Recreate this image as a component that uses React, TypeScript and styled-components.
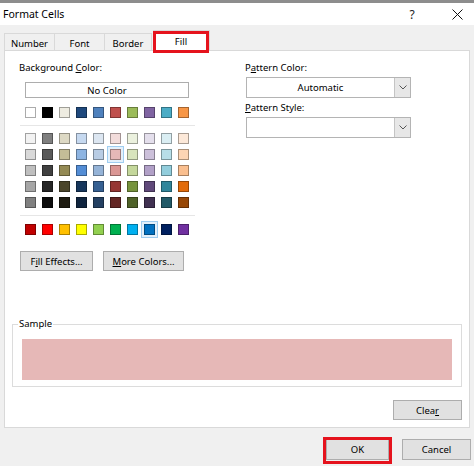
import React from 'react';
import styled, { createGlobalStyle } from 'styled-components';

const GlobalStyle = createGlobalStyle`
  html, body {
    margin: 0;
    padding: 0;
    overflow: hidden;
  }
  body {
    font-family: 'Noto Sans', 'Open Sans', sans-serif;
    font-size: 9.5px;
    color: #000;
  }
`;

const themeColors: string[][] = [
  ['#FFFFFF', '#000000', '#EEECE1', '#1F497D', '#4F81BD', '#C0504D', '#9BBB59', '#8064A2', '#4BACC6', '#F79646'],
];

const tintRows: string[][] = [
  ['#F2F2F2', '#7F7F7F', '#DDD9C4', '#C6D9F0', '#DCE6F1', '#F2DCDB', '#EBF1DE', '#E4DFEC', '#DAEEF3', '#FDE9D9'],
  ['#D9D9D9', '#595959', '#C4BD97', '#8DB4E2', '#B8CCE4', '#E6B8B7', '#D8E4BC', '#CCC0DA', '#B7DEE8', '#FCD5B4'],
  ['#BFBFBF', '#404040', '#948A54', '#538DD5', '#95B3D7', '#DA9694', '#C4D79B', '#B1A0C7', '#92CDDC', '#FABF8F'],
  ['#A6A6A6', '#262626', '#4A452A', '#16365C', '#366092', '#963634', '#76933C', '#60497A', '#31869B', '#E26B0A'],
  ['#808080', '#0D0D0D', '#1D1B10', '#0F243E', '#244062', '#632523', '#4F6228', '#403151', '#215967', '#974706'],
];

const standardColors = ['#C00000', '#FF0000', '#FFC000', '#FFFF00', '#92D050', '#00B050', '#00B0F0', '#0070C0', '#002060', '#7030A0'];

const selectedFill = '#E6B8B7';
const hoverColor = '#0070C0';

const Window = styled.div`
  width: 474px;
  height: 466px;
  background: #f0f0f0;
  display: flex;
  flex-direction: column;
`;

const TitleBar = styled.div`
  height: 22px;
  border-top: 3px solid #8d8d8d;
  background: #fff;
  display: flex;
  align-items: center;
  padding-left: 3px;
`;

const Title = styled.div`
  flex: 1;
  font-size: 10.5px;
`;

const TitleButton = styled.div`
  width: 34px;
  height: 22px;
  display: flex;
  align-items: center;
  justify-content: center;
  font-size: 12px;
  color: #222;
`;

const HelpButton = styled(TitleButton)`
  margin-right: 11px;
`;

const TabStrip = styled.div`
  height: 25px;
  display: flex;
  align-items: flex-end;
  padding-left: 4px;
`;

const Tab = styled.div<{ $width: number; $active?: boolean }>`
  position: relative;
  width: ${({ $width }) => $width}px;
  height: ${({ $active }) => ($active ? 20 : 17)}px;
  box-sizing: border-box;
  border: 1px solid #d9d9d9;
  border-bottom: none;
  border-left-width: ${({ $active }) => ($active ? 0 : 1)}px;
  background: ${({ $active }) => ($active ? '#fff' : '#f0f0f0')};
  display: flex;
  align-items: center;
  justify-content: center;
  padding-top: ${({ $active }) => ($active ? 2 : 3)}px;
  margin-left: ${({ $active }) => ($active ? 1 : 0)}px;
  & + & {
    border-left: none;
  }
`;

const Highlight = styled.span<{ $inset: string }>`
  position: absolute;
  inset: ${({ $inset }) => $inset};
  border: 3px solid #e5131d;
  pointer-events: none;
`;

const Panel = styled.div`
  height: 378px;
  margin: 0 4px;
  box-sizing: border-box;
  background: #fff;
  border: 1px solid #d9d9d9;
  padding: 0 7px 7px 7px;
  display: flex;
  flex-direction: column;
`;

const TopSection = styled.div`
  display: flex;
  padding: 10px 0 0 7px;
`;

const LeftColumn = styled.div`
  width: 176px;
  display: flex;
  flex-direction: column;
`;

const RightColumn = styled.div`
  margin-left: 50px;
  width: 166px;
  display: flex;
  flex-direction: column;
`;

const Label = styled.div<{ $gap?: number }>`
  line-height: 14px;
  height: 14px;
  margin-top: ${({ $gap }) => $gap ?? 0}px;
  white-space: nowrap;
`;

const Key = styled.span`
  text-decoration: underline;
  text-underline-offset: 1px;
`;

const NoColorButton = styled.div`
  margin: 7px 0 0 6px;
  width: 164px;
  height: 16px;
  box-sizing: border-box;
  border: 1px solid #adadad;
  background: #fff;
  display: flex;
  align-items: center;
  justify-content: center;
`;

const SwatchGrid = styled.div<{ $gap: number }>`
  margin: ${({ $gap }) => $gap}px 0 0 6px;
  display: grid;
  grid-template-columns: repeat(10, 11px);
  grid-auto-rows: 11px;
  column-gap: 6px;
  row-gap: 5px;
`;

const Swatch = styled.div<{ $color: string; $selected?: boolean }>`
  width: 11px;
  height: 11px;
  box-sizing: border-box;
  background: ${({ $color }) => $color};
  border: 1px solid rgba(0, 0, 0, 0.33);
  box-shadow: ${({ $selected }) =>
    $selected ? '0 0 0 2px #e3f0fb, 0 0 0 3px #9fcdf0' : 'none'};
`;

const Divider = styled.div`
  margin: 7px 0 0 1px;
  height: 1px;
  background: #e6e6e6;
`;

const ButtonRow = styled.div`
  display: flex;
  gap: 10px;
  margin: 16px 0 0 1px;
`;

const Button = styled.div<{ $width: number; $height?: number }>`
  position: relative;
  width: ${({ $width }) => $width}px;
  height: ${({ $height }) => $height ?? 20}px;
  box-sizing: border-box;
  border: 1px solid #adadad;
  background: #e1e1e1;
  display: flex;
  align-items: center;
  justify-content: center;
  white-space: nowrap;
`;

const Combo = styled.div<{ $gap: number }>`
  margin: ${({ $gap }) => $gap}px 0 0 1px;
  width: 165px;
  height: 21px;
  box-sizing: border-box;
  border: 1px solid #b4b4b4;
  background: #fff;
  display: flex;
`;

const ComboText = styled.div`
  flex: 1;
  display: flex;
  align-items: center;
  justify-content: center;
`;

const ComboArrow = styled.div`
  width: 15px;
  border-left: 1px solid #c4c4c4;
  background: #e7e7e7;
  display: flex;
  align-items: center;
  justify-content: center;
`;

const SampleGroup = styled.fieldset`
  margin: 47px 0 0 0;
  padding: 9px 9px 6px 9px;
  border: 1px solid #dcdcdc;
  min-width: 0;
`;

const SampleLegend = styled.legend`
  margin-left: -4px;
  padding: 0 1px;
  line-height: 12px;
`;

const SampleFill = styled.div<{ $color: string }>`
  height: 41px;
  background: ${({ $color }) => $color};
`;

const ClearRow = styled.div`
  display: flex;
  justify-content: flex-end;
  margin-top: 13px;
`;

const Footer = styled.div`
  flex: 1;
  display: flex;
  justify-content: flex-end;
  align-items: flex-start;
  gap: 13px;
  padding: 11px 3px 0 0;
`;

const Chevron = () => (
  <svg width="8" height="5" viewBox="0 0 8 5">
    <polyline points="0.5,0.5 4,4 7.5,0.5" fill="none" stroke="#555" strokeWidth="1" />
  </svg>
);

const CloseIcon = () => (
  <svg width="11" height="11" viewBox="0 0 11 11">
    <path d="M0.5 0.5 L10.5 10.5 M10.5 0.5 L0.5 10.5" stroke="#111" strokeWidth="1" />
  </svg>
);

const App: React.FC = () => {
  const tabs = [
    { name: 'Number', width: 51 },
    { name: 'Font', width: 50 },
    { name: 'Border', width: 47 },
  ];

  return (
    <Window>
      <GlobalStyle />
      <TitleBar>
        <Title>Format Cells</Title>
        <HelpButton>?</HelpButton>
        <TitleButton>
          <CloseIcon />
        </TitleButton>
      </TitleBar>

      <TabStrip>
        {tabs.map((tab) => (
          <Tab key={tab.name} $width={tab.width}>
            {tab.name}
          </Tab>
        ))}
        <Tab $width={57} $active>
          Fill
          <Highlight $inset="0 0 -3px 0" />
        </Tab>
      </TabStrip>

      <Panel>
        <TopSection>
          <LeftColumn>
            <Label>
              Background <Key>C</Key>olor:
            </Label>
            <NoColorButton>No Color</NoColorButton>
            <SwatchGrid $gap={9}>
              {themeColors[0].map((c) => (
                <Swatch key={c} $color={c} />
              ))}
            </SwatchGrid>
            <Divider />
            <SwatchGrid $gap={7}>
              {tintRows.flat().map((c) => (
                <Swatch key={c} $color={c} $selected={c === selectedFill} />
              ))}
            </SwatchGrid>
            <Divider />
            <SwatchGrid $gap={8}>
              {standardColors.map((c) => (
                <Swatch key={c} $color={c} $selected={c === hoverColor} />
              ))}
            </SwatchGrid>
            <ButtonRow>
              <Button $width={73}>
                <span>
                  F<Key>i</Key>ll Effects...
                </span>
              </Button>
              <Button $width={81}>
                <span>
                  <Key>M</Key>ore Colors...
                </span>
              </Button>
            </ButtonRow>
          </LeftColumn>

          <RightColumn>
            <Label>
              P<Key>a</Key>ttern Color:
            </Label>
            <Combo $gap={2}>
              <ComboText>Automatic</ComboText>
              <ComboArrow>
                <Chevron />
              </ComboArrow>
            </Combo>
            <Label $gap={3}>
              <Key>P</Key>attern Style:
            </Label>
            <Combo $gap={2}>
              <ComboText />
              <ComboArrow>
                <Chevron />
              </ComboArrow>
            </Combo>
          </RightColumn>
        </TopSection>

        <SampleGroup>
          <SampleLegend>Sample</SampleLegend>
          <SampleFill $color={selectedFill} />
        </SampleGroup>

        <ClearRow>
          <Button $width={69}>
            <span>
              Clea<Key>r</Key>
            </span>
          </Button>
        </ClearRow>
      </Panel>

      <Footer>
        <Button $width={63} $height={21}>
          OK
          <Highlight $inset="-3px -4px -5px -4px" />
        </Button>
        <Button $width={69} $height={21}>
          Cancel
        </Button>
      </Footer>
    </Window>
  );
};

export default App;
